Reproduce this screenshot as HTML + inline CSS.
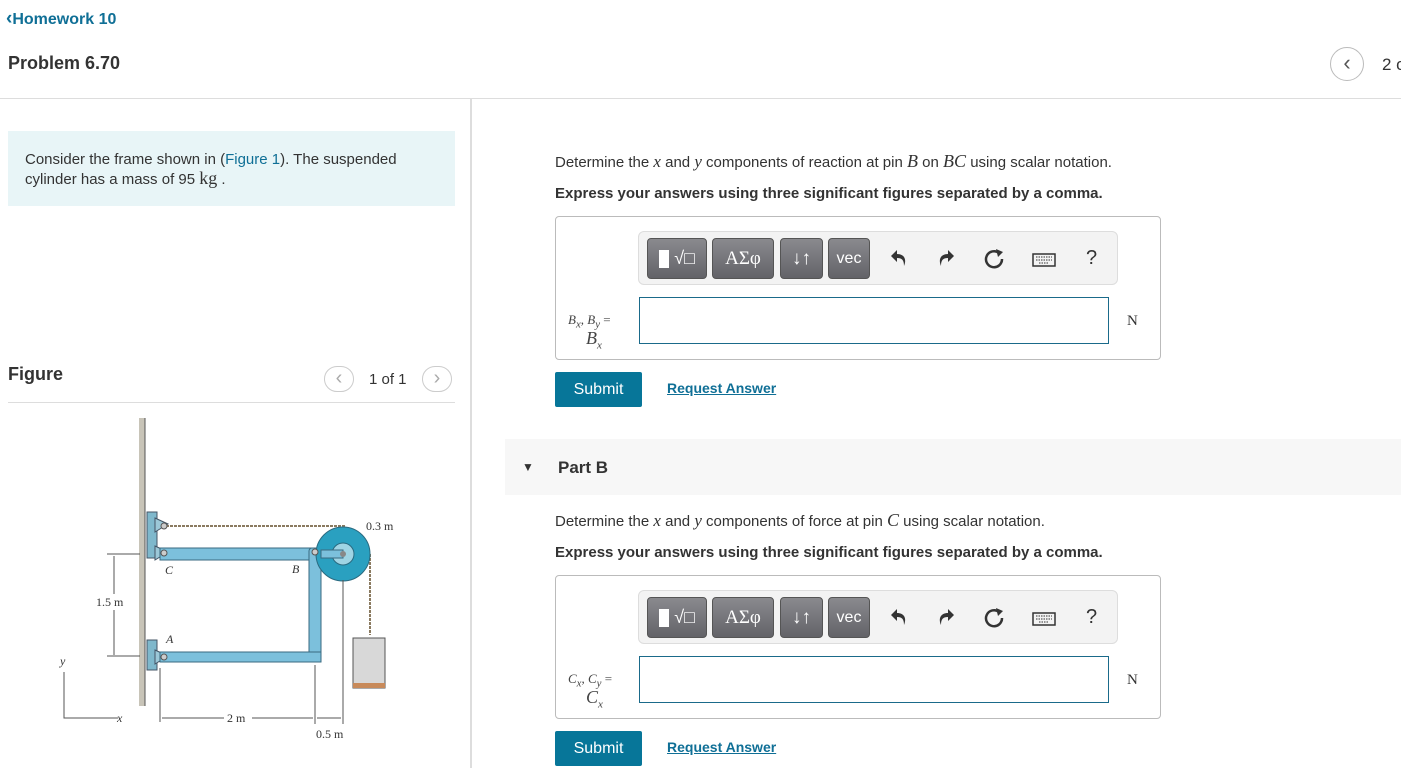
<!DOCTYPE html><html><head><meta charset="utf-8"><style>
*{margin:0;padding:0;box-sizing:border-box}
body{width:1401px;height:768px;overflow:hidden;background:#fff;font-family:"Liberation Sans",Arial,sans-serif;color:#333;position:relative}
.a{position:absolute;white-space:nowrap}
.t{font-size:15px;color:#333}
.btn{position:absolute;top:6px;height:41px;border-radius:4px;background:linear-gradient(#8a8a8e,#636368);border:1px solid #555;color:#fff;font-size:19px;text-align:center;line-height:39px}
.tb{position:absolute;left:82px;width:480px;height:54px;border:1px solid #ddd;border-radius:6px;background:#f3f3f3}
.box{position:absolute;left:555px;width:606px;height:144px;border:1px solid #bbb;border-radius:4px}
.inp{position:absolute;left:83px;top:80px;width:470px;height:47px;border:1px solid #1a6a8a}
.sub{position:absolute;left:555px;width:87px;height:35px;background:#077699;color:#fff;font-size:16px;line-height:35px;text-align:center;border-radius:2px}
.req{position:absolute;left:667px;color:#0f6f96;font-weight:bold;text-decoration:underline;font-size:14px}
.ic{position:absolute;top:15px}
.ser{font-family:"Liberation Serif",serif;font-style:italic}
</style></head><body>
<div class="a" style="left:6px;top:8px;font-size:16px;color:#0f6f96;font-weight:bold"><span style="font-size:19px">&lsaquo;</span>Homework 10</div>
<div class="a" style="left:8px;top:53px;font-size:18px;font-weight:bold;color:#333">Problem 6.70</div>
<div class="a" style="left:1330px;top:47px;width:34px;height:34px;border:1px solid #bbb;border-radius:50%;text-align:center;line-height:30px;font-size:22px;color:#555">&#8249;</div>
<div class="a" style="left:1382px;top:55px;font-size:17px">2 o</div>
<div class="a" style="left:0;top:98px;width:1401px;height:1px;background:#ddd"></div>
<div class="a" style="left:470px;top:98px;width:2px;height:670px;background:#ddd"></div>
<div class="a" style="left:8px;top:131px;width:447px;height:75px;background:#e8f5f7"></div>
<div class="a t" style="left:25px;top:151px;width:420px;line-height:18px;white-space:normal">Consider the frame shown in (<span style="color:#0f6f96">Figure 1</span>). The suspended cylinder has a mass of 95 <span style="font-family:'Liberation Serif',serif;font-size:18px">kg</span> .</div>
<div class="a" style="left:8px;top:364px;font-size:18px;font-weight:bold">Figure</div>
<div class="a" style="left:324px;top:366px;width:30px;height:26px;border:1px solid #ccc;border-radius:13px;text-align:center;color:#aaa;font-size:20px;line-height:22px">&#8249;</div>
<div class="a t" style="left:369px;top:371px">1 of 1</div>
<div class="a" style="left:422px;top:366px;width:30px;height:26px;border:1px solid #ccc;border-radius:13px;text-align:center;color:#aaa;font-size:20px;line-height:22px">&#8250;</div>
<div class="a" style="left:8px;top:402px;width:447px;height:1px;background:#ddd"></div>
<svg class="a" style="left:0;top:410px" width="470" height="358" viewBox="0 410 470 358">
<rect x="139" y="418" width="6" height="288" fill="#c8c4b8"/><line x1="145" y1="418" x2="145" y2="706" stroke="#555"/>
<line x1="162" y1="526" x2="345" y2="526" stroke="#8a7a60" stroke-width="2" stroke-dasharray="3,1"/>
<line x1="370" y1="554" x2="370" y2="635" stroke="#8a7a60" stroke-width="2" stroke-dasharray="3,1"/>
<rect x="147" y="512" width="10" height="46" fill="#7fb8cc" stroke="#456"/>
<rect x="147" y="640" width="10" height="30" fill="#7fb8cc" stroke="#456"/>
<path d="M155 518 L168 524 L155 532Z M155 546 L168 552 L155 560Z M155 650 L168 656 L155 664Z" fill="#9cc8d8" stroke="#456"/>
<rect x="160" y="548" width="165" height="12" fill="#7cc0dc" stroke="#3a6a80"/>
<rect x="309" y="548" width="12" height="112" rx="3" fill="#7cc0dc" stroke="#3a6a80"/>
<rect x="160" y="652" width="161" height="10" fill="#7cc0dc" stroke="#3a6a80"/>
<circle cx="343" cy="554" r="27" fill="#2aa0c0" stroke="#2a6a80"/>
<circle cx="343" cy="554" r="11" fill="#9fd4e4" stroke="#2a6a80"/>
<rect x="321" y="550" width="22" height="8" fill="#7cc0dc" stroke="#3a6a80"/>
<circle cx="343" cy="554" r="3" fill="#888"/><circle cx="164" cy="526" r="3" fill="#ccc" stroke="#555"/><circle cx="164" cy="553" r="3" fill="#ccc" stroke="#555"/><circle cx="164" cy="657" r="3" fill="#ccc" stroke="#555"/><circle cx="315" cy="552" r="3" fill="#ccc" stroke="#555"/>
<rect x="353" y="638" width="32" height="50" fill="#d8d8d8" stroke="#555"/><rect x="353" y="683" width="32" height="5" fill="#c88a5a"/>
<g font-family="Liberation Serif,serif" font-size="12" fill="#333">
<text x="366" y="530">0.3 m</text><text x="165" y="574" font-style="italic">C</text><text x="292" y="573" font-style="italic">B</text><text x="166" y="643" font-style="italic">A</text>
<text x="96" y="606">1.5 m</text><text x="60" y="665" font-style="italic">y</text><text x="117" y="722" font-style="italic">x</text><text x="227" y="722">2 m</text><text x="316" y="738">0.5 m</text></g>
<g stroke="#555" fill="none"><line x1="107" y1="554" x2="140" y2="554"/><line x1="107" y1="656" x2="140" y2="656"/><line x1="114" y1="556" x2="114" y2="594"/><line x1="114" y1="610" x2="114" y2="655"/>
<path d="M64 672 V718 H118"/><line x1="160" y1="668" x2="160" y2="722"/><line x1="315" y1="665" x2="315" y2="724"/><line x1="343" y1="580" x2="343" y2="724"/>
<line x1="162" y1="718" x2="224" y2="718"/><line x1="252" y1="718" x2="313" y2="718"/><line x1="317" y1="718" x2="341" y2="718"/></g>
</svg>

<div class="a t" style="left:555px;top:151px">Determine the <span class="ser" style="font-size:17px">x</span> and <span class="ser" style="font-size:17px">y</span> components of reaction at pin <span class="ser" style="font-size:18px">B</span> on <span class="ser" style="font-size:18px">BC</span> using scalar notation.</div>
<div class="a" style="left:555px;top:185px;font-size:15px;font-weight:bold">Express your answers using three significant figures separated by a comma.</div>
<div class="box" style="top:216px">
<div class="tb" style="top:14px">
<div class="btn" style="left:8px;width:60px"><span style="display:inline-block;width:10px;height:18px;background:#fff;vertical-align:middle"></span> <span style="font-size:18px">&#8730;&#9633;</span></div>
<div class="btn" style="left:73px;width:62px;font-family:'Liberation Serif',serif">ΑΣφ</div>
<div class="btn" style="left:141px;width:43px">&#8595;&#8593;</div>
<div class="btn" style="left:189px;width:42px;font-size:16px">vec</div>
<svg class="ic" style="left:250px" width="20" height="22" viewBox="0 0 20 22"><path d="M8 3 L2 9 L8 15 V11 C13 11 15 13 15 19 C18 12 15 7 8 7Z" fill="#333"/></svg>
<svg class="ic" style="left:297px" width="20" height="22" viewBox="0 0 20 22"><path d="M12 3 L18 9 L12 15 V11 C7 11 5 13 5 19 C2 12 5 7 12 7Z" fill="#333"/></svg>
<svg class="ic" style="left:345px" width="22" height="24" viewBox="0 0 22 24"><path d="M15 6 A8 8 0 1 0 18 12" fill="none" stroke="#333" stroke-width="2.5"/><path d="M12 2 L19 5 L14 10Z" fill="#333"/></svg>
<svg class="ic" style="left:393px;top:21px" width="24" height="14" viewBox="0 0 24 14"><rect x="1" y="1" width="22" height="12" fill="none" stroke="#333" stroke-width="1.5"/><path d="M4 4h16M4 7h16M7 10h10" stroke="#333" stroke-dasharray="1.5,1"/></svg>
<div class="ic" style="left:447px;font-size:20px;color:#333">?</div></div>
<div class="a ser" style="left:12px;top:95px;font-size:13px;color:#444">B<sub>x</sub>, B<sub>y</sub> <span style="font-style:normal">=</span></div>
<div class="a ser" style="left:30px;top:111px;font-size:18px;color:#444">B<sub style="font-size:11px">x</sub></div>
<div class="inp"></div>
<div class="a" style="left:571px;top:96px;font-family:'Liberation Serif',serif;font-size:15px">N</div>
</div>
<div class="sub" style="top:372px">Submit</div><div class="req" style="top:380px">Request Answer</div>
<div class="a" style="left:505px;top:439px;width:896px;height:56px;background:#f7f7f7"></div>
<div class="a" style="left:522px;top:460px;font-size:12px">&#9660;</div>
<div class="a" style="left:558px;top:458px;font-size:17px;font-weight:bold">Part B</div>
<div class="a t" style="left:555px;top:510px">Determine the <span class="ser" style="font-size:17px">x</span> and <span class="ser" style="font-size:17px">y</span> components of force at pin <span class="ser" style="font-size:18px">C</span> using scalar notation.</div>
<div class="a" style="left:555px;top:544px;font-size:15px;font-weight:bold">Express your answers using three significant figures separated by a comma.</div>
<div class="box" style="top:575px">
<div class="tb" style="top:14px">
<div class="btn" style="left:8px;width:60px"><span style="display:inline-block;width:10px;height:18px;background:#fff;vertical-align:middle"></span> <span style="font-size:18px">&#8730;&#9633;</span></div>
<div class="btn" style="left:73px;width:62px;font-family:'Liberation Serif',serif">ΑΣφ</div>
<div class="btn" style="left:141px;width:43px">&#8595;&#8593;</div>
<div class="btn" style="left:189px;width:42px;font-size:16px">vec</div>
<svg class="ic" style="left:250px" width="20" height="22" viewBox="0 0 20 22"><path d="M8 3 L2 9 L8 15 V11 C13 11 15 13 15 19 C18 12 15 7 8 7Z" fill="#333"/></svg>
<svg class="ic" style="left:297px" width="20" height="22" viewBox="0 0 20 22"><path d="M12 3 L18 9 L12 15 V11 C7 11 5 13 5 19 C2 12 5 7 12 7Z" fill="#333"/></svg>
<svg class="ic" style="left:345px" width="22" height="24" viewBox="0 0 22 24"><path d="M15 6 A8 8 0 1 0 18 12" fill="none" stroke="#333" stroke-width="2.5"/><path d="M12 2 L19 5 L14 10Z" fill="#333"/></svg>
<svg class="ic" style="left:393px;top:21px" width="24" height="14" viewBox="0 0 24 14"><rect x="1" y="1" width="22" height="12" fill="none" stroke="#333" stroke-width="1.5"/><path d="M4 4h16M4 7h16M7 10h10" stroke="#333" stroke-dasharray="1.5,1"/></svg>
<div class="ic" style="left:447px;font-size:20px;color:#333">?</div></div>
<div class="a ser" style="left:12px;top:95px;font-size:13px;color:#444">C<sub>x</sub>, C<sub>y</sub> <span style="font-style:normal">=</span></div>
<div class="a ser" style="left:30px;top:111px;font-size:18px;color:#444">C<sub style="font-size:11px">x</sub></div>
<div class="inp"></div>
<div class="a" style="left:571px;top:96px;font-family:'Liberation Serif',serif;font-size:15px">N</div>
</div>
<div class="sub" style="top:731px">Submit</div><div class="req" style="top:739px">Request Answer</div>
</body></html>
